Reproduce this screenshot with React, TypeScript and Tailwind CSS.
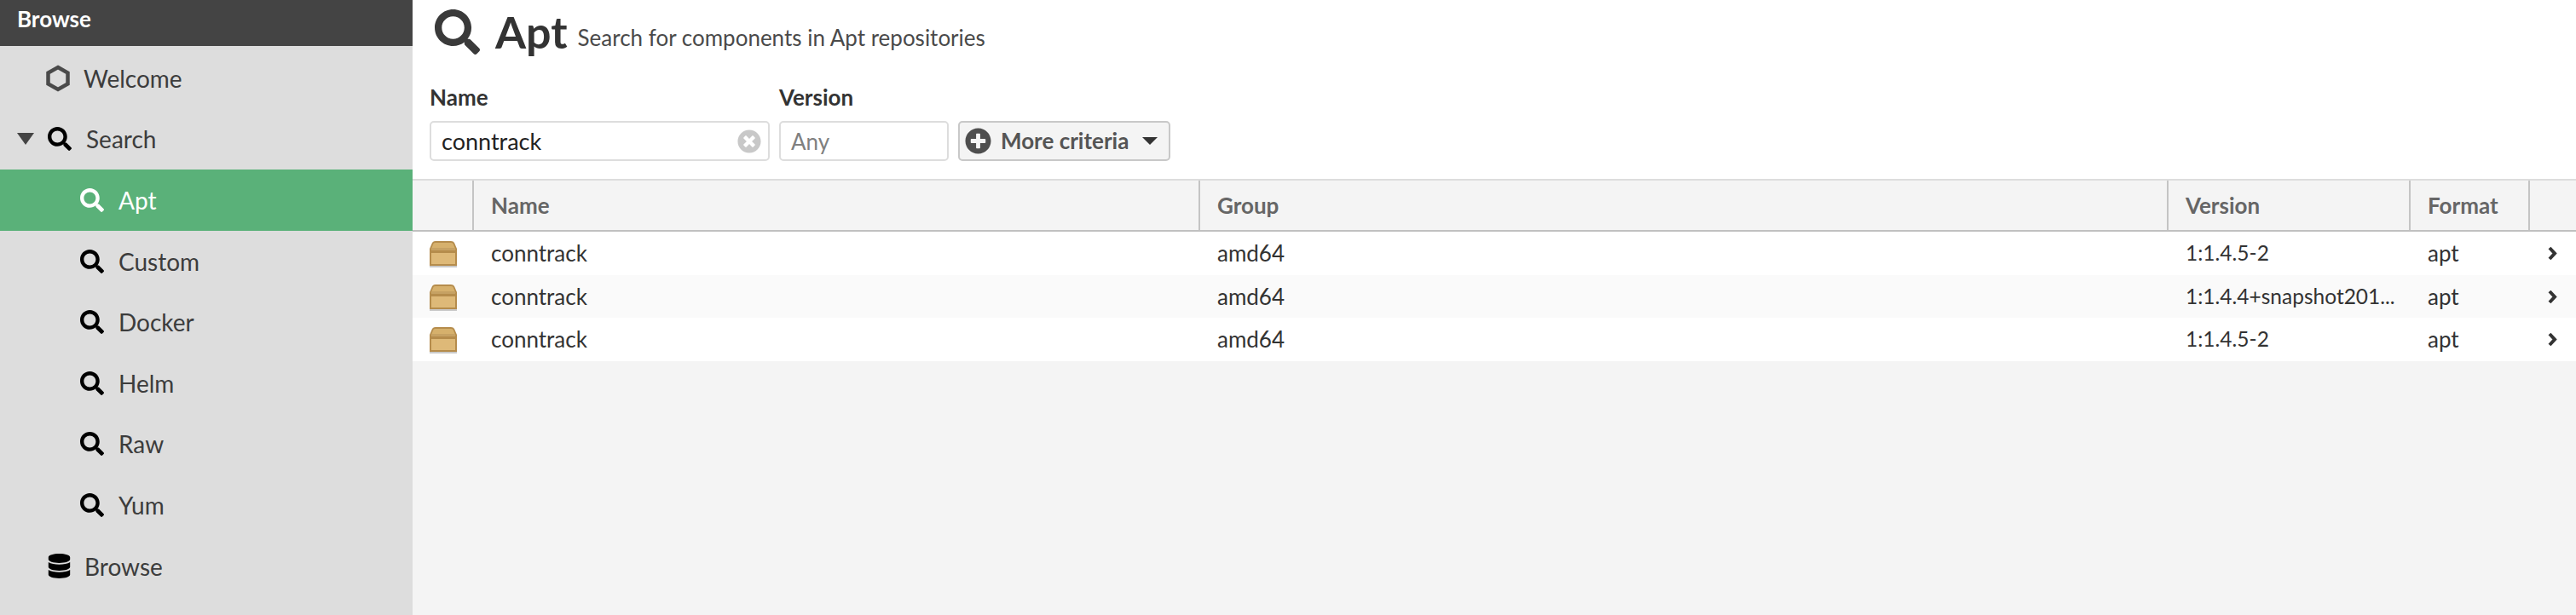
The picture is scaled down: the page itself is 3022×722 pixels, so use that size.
import { FaSearch, FaDatabase, FaPlusCircle, FaTimesCircle } from "react-icons/fa";

const GRID = "grid grid-cols-[72px_852px_1136px_284px_140px_1fr]";

const repos = ["Apt", "Custom", "Docker", "Helm", "Raw", "Yum"];

const rows = [
  { version: "1:1.4.5-2", bg: "bg-white h-[51px]" },
  { version: "1:1.4.4+snapshot201...", bg: "bg-[#fafafa] h-[50px]" },
  { version: "1:1.4.5-2", bg: "bg-white h-[51px]" },
];

function BoxIcon() {
  return (
    <svg width="32" height="31" viewBox="0 0 32 31" className="block">
      <path d="M0 9 L3 2 Q4 0 7 0 H25 Q28 0 29 2 L32 9 V29 H0 Z" fill="#b58c4c" />
      <path d="M1.5 10 L4.5 3 Q5 2 7 2 H25 Q27 2 27.5 3 L30.5 10 Z" fill="#d6b06c" />
      <rect x="2" y="8" width="28" height="3" fill="#c6a163" />
      <rect x="2" y="12" width="28" height="2" fill="#b58c4c" />
      <rect x="2" y="14" width="28" height="13" fill="#deb978" />
      <rect x="0" y="29" width="32" height="2" fill="#c9c9c9" />
    </svg>
  );
}

function ChevronIcon() {
  return (
    <svg width="11" height="17" viewBox="0 0 11 17" className="block">
      <path d="M2 2 L8 8.5 L2 15" fill="none" stroke="#333333" strokeWidth="4" />
    </svg>
  );
}

function HexIcon() {
  return (
    <svg width="30" height="32" viewBox="0 0 30 32" className="block shrink-0">
      <path d="M15 3 L26.5 9.5 V22.5 L15 29 L3.5 22.5 V9.5 Z" fill="none" stroke="#4a4a4a" strokeWidth="4.5" />
    </svg>
  );
}

function SideRow({ children, active }: { children: React.ReactNode; active?: boolean }) {
  return (
    <div
      className={`flex h-[71.6px] items-center text-[28px] ${
        active ? "bg-[#5ab179] text-white" : "text-[#3c3c3c]"
      }`}
    >
      {children}
    </div>
  );
}

function Sidebar() {
  return (
    <aside className="w-[484px] shrink-0 bg-[#dddddd]">
      <div className="flex h-[54px] items-center bg-[#444444] pb-[10px] pl-[20px] text-[26px] font-bold text-white">
        Browse
      </div>
      <div className="h-[2px]" />
      <SideRow>
        <span className="ml-[53px] mr-[15px]">
          <HexIcon />
        </span>
        Welcome
      </SideRow>
      <SideRow>
        <span className="ml-[20px] mr-[16px] h-0 w-0 border-x-[10px] border-t-[14px] border-x-transparent border-t-[#444444]" />
        <FaSearch className="mr-[17px] text-[28px] text-black" />
        Search
      </SideRow>
      {repos.map((name) => (
        <SideRow key={name} active={name === "Apt"}>
          <FaSearch className={`ml-[94px] mr-[17px] text-[28px] ${name === "Apt" ? "text-white" : "text-black"}`} />
          {name}
        </SideRow>
      ))}
      <SideRow>
        <FaDatabase className="ml-[55px] mr-[15px] text-[29px] text-black" />
        Browse
      </SideRow>
    </aside>
  );
}

function SearchHeader() {
  return (
    <header className="h-[210px] bg-white pl-[20px]">
      <div className="flex h-[78px] items-center pb-[4px] pl-[6px]">
        <FaSearch className="mr-[18px] mt-[1px] text-[53px] text-[#3a3a3a]" />
        <span className="mr-[12px] text-[52px] font-bold leading-none text-[#333333]">Apt</span>
        <span className="mt-[15px] text-[26px] text-[#4a4a4a]">Search for components in Apt repositories</span>
      </div>
      <div className="mt-[20px] flex gap-[11px]">
        <div className="w-[399px]">
          <div className="mb-[12px] text-[26px] font-bold leading-[32px] text-[#333333]">Name</div>
          <div className="flex h-[47px] items-center rounded-[5px] border-2 border-[#dddddd] bg-white pl-[12px] pr-[8px] pt-[1px] text-[27px] text-[#222222]">
            conntrack
            <FaTimesCircle className="ml-auto text-[28px] text-[#c8c8c8]" />
          </div>
        </div>
        <div className="w-[199px]">
          <div className="mb-[12px] text-[26px] font-bold leading-[32px] text-[#333333]">Version</div>
          <div className="flex h-[47px] items-center rounded-[5px] border-2 border-[#dddddd] bg-white pl-[12px] pt-[1px] text-[26px] text-[#808080]">
            Any
          </div>
        </div>
        <div className="mt-[44px] flex h-[47px] w-[249px] items-center rounded-[5px] border-2 border-[#c8c8c8] bg-[#f4f4f4] pl-[6px] text-[26px] font-bold text-[#555555]">
          <FaPlusCircle className="mr-[11px] text-[31px] text-[#4e4e4e]" />
          More criteria
          <span className="ml-[16px] h-0 w-0 border-x-[9px] border-t-[9px] border-x-transparent border-t-[#333333]" />
        </div>
      </div>
    </header>
  );
}

function ResultsTable() {
  const heads = ["", "Name", "Group", "Version", "Format", ""];
  return (
    <section className="flex-1 bg-[#f4f4f4]">
      <div className={`${GRID} h-[62px] border-y-2 border-t-[#dddddd] border-b-[#c0c0c0] bg-[#f4f4f4]`}>
        {heads.map((h, i) => (
          <div
            key={i}
            className={`flex items-center pl-[20px] text-[26px] font-bold text-[#666666] ${
              i < 5 ? "border-r-2 border-[#c4c4c4]" : ""
            }`}
          >
            {h}
          </div>
        ))}
      </div>
      {rows.map((r, i) => (
        <div key={i} className={`${GRID} ${r.bg} items-center text-[26px] text-[#333333]`}>
          <div className="pl-[20px] pt-[2px]">
            <BoxIcon />
          </div>
          <div className="pl-[20px]">conntrack</div>
          <div className="pl-[20px]">amd64</div>
          <div className="truncate pl-[20px] text-[24.5px]">{r.version}</div>
          <div className="pl-[20px]">apt</div>
          <div className="pl-[21px]">
            <ChevronIcon />
          </div>
        </div>
      ))}
    </section>
  );
}

export default function App() {
  return (
    <div className="flex h-[722px] w-[3022px] overflow-hidden font-['Lato',sans-serif]">
      <Sidebar />
      <main className="flex min-w-0 flex-1 flex-col">
        <SearchHeader />
        <ResultsTable />
      </main>
    </div>
  );
}
